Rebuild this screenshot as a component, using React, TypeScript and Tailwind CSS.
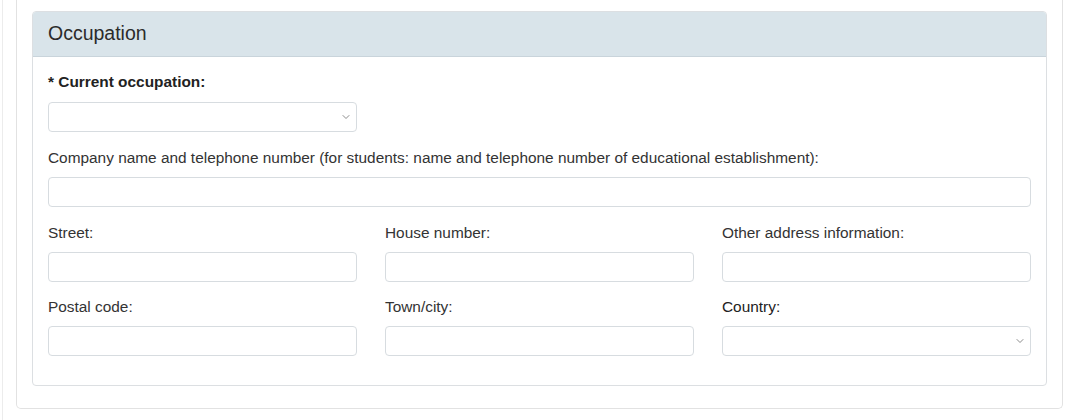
import { ChevronDown } from 'lucide-react';

const font = { fontFamily: '"Liberation Sans", Arial, Helvetica, sans-serif' };

function TextField({ label, tight = false }: { label: string; tight?: boolean }) {
  return (
    <div className={tight ? 'mb-[15px]' : 'mb-4'}>
      <label className="block text-[15.4px] leading-5 text-[#333] mb-[9px]">{label}</label>
      <input
        type="text"
        className="block w-full h-[30px] rounded-[4px] border border-[#d7dce0] bg-white px-2 text-sm outline-none"
      />
    </div>
  );
}

function SelectField({
  label,
  bold = false,
  narrow = false,
  gap = 'mb-[10px]',
}: {
  label: string;
  bold?: boolean;
  narrow?: boolean;
  gap?: string;
}) {
  return (
    <div className="mb-4">
      <label className={`block text-[15.4px] leading-5 text-[#222] ${gap} ${bold ? 'font-bold' : ''}`}>
        {label}
      </label>
      <div
        className={`relative h-[30px] rounded-[4px] border border-[#d7dce0] bg-white ${
          narrow ? 'w-[309px]' : 'w-full'
        }`}
      >
        <ChevronDown className="absolute right-[4px] top-[8px] w-3 h-3 text-[#666]" strokeWidth={1.5} />
      </div>
    </div>
  );
}

export default function App() {
  return (
    <div className="w-[1076px] h-[420px] bg-white overflow-hidden" style={font}>
      <div className="ml-[2px] h-full border-l border-[#ececec] pl-[13px] pr-[13px]">
        <div className="border border-t-0 border-[#e2e2e2] rounded-b-[5px] px-[15px] pt-[11px] pb-[22px]">
          <div className="border border-[#dcdfe2] rounded-[4px] bg-white">
            <div className="h-[45px] bg-[#d9e4ea] border-b border-[#c9d4db] rounded-t-[3px] px-[15px] flex items-center">
              <h3 className="text-[19.5px] text-[#2b2b2b] leading-none">Occupation</h3>
            </div>
            <div className="px-[15px] pt-[15px] pb-[13px]">
              <SelectField label="* Current occupation:" bold narrow />
              <TextField label="Company name and telephone number (for students: name and telephone number of educational establishment):" />
              <div className="grid grid-cols-3 gap-x-[28px]">
                <TextField label="Street:" tight />
                <TextField label="House number:" tight />
                <TextField label="Other address information:" tight />
                <TextField label="Postal code:" />
                <TextField label="Town/city:" />
                <SelectField label="Country:" gap="mb-[9px]" />
              </div>
            </div>
          </div>
        </div>
      </div>
    </div>
  );
}
